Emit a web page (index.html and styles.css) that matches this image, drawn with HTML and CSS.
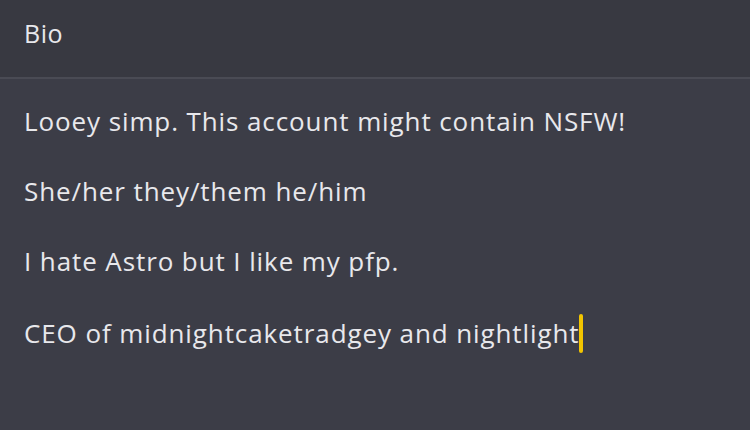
FILE: index.html
```html
<!DOCTYPE html>
<html>
<head>
<meta charset="utf-8">
<link rel="stylesheet" href="styles.css">
</head>
<body>
<div class="panel">
  <div class="header">Bio</div>
  <div class="bio">
    <p class="line">Looey simp. This account might contain NSFW!</p>
    <p class="line">She/her they/them he/him</p>
    <p class="line">I hate Astro but I like my pfp.</p>
    <p class="line">CEO of midnightcaketradgey and nightlight<span class="caret"></span></p>
  </div>
</div>
</body>
</html>
```
FILE: styles.css
```css
html, body {
  margin: 0;
  padding: 0;
  background: #3c3d47;
}
.panel {
  width: 750px;
  height: 430px;
  font-family: "Open Sans", sans-serif;
  color: #e8e8ec;
  display: flex;
  flex-direction: column;
}
.header {
  background: #383941;
  height: 79px;
  box-sizing: border-box;
  padding: 16px 0 0 24px;
  font-size: 25px;
  line-height: 34px;
  letter-spacing: 0.5px;
  border-bottom: 2px solid #4a4b54;
}
.bio {
  padding: 25px 24px 0 24px;
  font-size: 26px;
  letter-spacing: 0.9px;
}
.line {
  margin: 0;
  line-height: 35px;
  height: 70px;
  white-space: nowrap;
}
.caret {
  display: inline-block;
  width: 4px;
  height: 39px;
  border-radius: 2px;
  background: #f2c500;
  vertical-align: -10px;
  margin-left: 0;
}
```
